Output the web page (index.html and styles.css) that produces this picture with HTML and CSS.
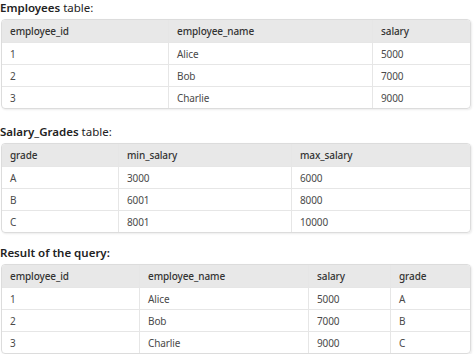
FILE: index.html
```html
<!DOCTYPE html>
<html>
<head>
<meta charset="utf-8">
<title>Employees and salary grades</title>
<link rel="stylesheet" href="styles.css">
</head>
<body>
<div class="page">
	<p class="title"><b>Employees</b> table:</p>
	<table class="grid t-emp">
		<tr><th>employee_id</th><th>employee_name</th><th>salary</th></tr>
		<tr><td>1</td><td>Alice</td><td>5000</td></tr>
		<tr><td>2</td><td>Bob</td><td>7000</td></tr>
		<tr><td>3</td><td>Charlie</td><td>9000</td></tr>
	</table>

	<p class="title second"><b>Salary_Grades</b> table:</p>
	<table class="grid t-grade">
		<tr><th>grade</th><th>min_salary</th><th>max_salary</th></tr>
		<tr><td>A</td><td>3000</td><td>6000</td></tr>
		<tr><td>B</td><td>6001</td><td>8000</td></tr>
		<tr><td>C</td><td>8001</td><td>10000</td></tr>
	</table>

	<p class="title third"><b>Result of the query:</b></p>
	<table class="grid t-result">
		<tr><th>employee_id</th><th>employee_name</th><th>salary</th><th>grade</th></tr>
		<tr><td>1</td><td>Alice</td><td>5000</td><td>A</td></tr>
		<tr><td>2</td><td>Bob</td><td>7000</td><td>B</td></tr>
		<tr><td>3</td><td>Charlie</td><td>9000</td><td>C</td></tr>
	</table>
</div>
</body>
</html>
```
FILE: styles.css
```css
body{
	margin: 0;
	background: #fff;
	color: #333;
	font-family: "Noto Sans", "Open Sans", sans-serif;
	font-size: 10px;
}
.page{padding: 0 3px 0 1px;}

.title{
	margin: 0 0 3px -1px;
	line-height: 16px;
	font-size: 11.5px;
	color: #222;
}
.title b{font-weight: 600;}
.second{margin-top: 15px;}
.third{margin-top: 12px;}

/* tables */
.grid{
	width: 470px;
	border-collapse: separate;
	border-spacing: 0;
	border: 1px solid #dcdcdc;
	border-radius: 4px;
	box-shadow: 1px 1px 2px rgba(0,0,0,.08);
	overflow: hidden;
}
.grid th, .grid td{
	box-sizing: border-box;
	height: 22px;
	padding: 0 8px;
	text-align: left;
	border-left: 1px solid #e6e6e6;
	border-top: 1px solid #e6e6e6;
	white-space: nowrap;
	letter-spacing: -0.1px;
}
.grid th{
	height: 22px;
	background: #e8e8e8;
	font-weight: 500;
	color: #333;
	border-top: none;
}
.grid td{color: #4a4a4a;}
.grid tr > :first-child{border-left: none;}

.t-emp th:nth-child(1){width: 166px;}
.t-emp th:nth-child(2){width: 204px;}
.t-grade th:nth-child(1){width: 116px;}
.t-grade th:nth-child(2){width: 173px;}
.t-result th:nth-child(1){width: 137px;}
.t-result th:nth-child(2){width: 169px;}
.t-result th:nth-child(3){width: 82px;}
```
